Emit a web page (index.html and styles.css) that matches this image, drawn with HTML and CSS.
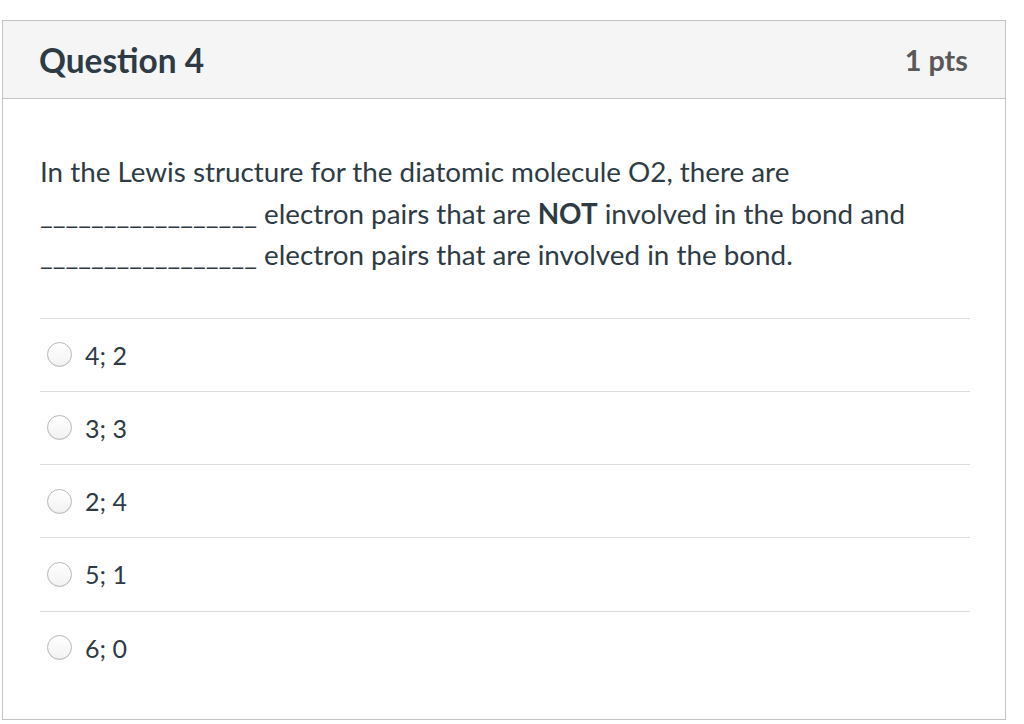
FILE: index.html
```html
<!DOCTYPE html>
<html>
<head>
<meta charset="utf-8">
<link rel="stylesheet" href="styles.css">
</head>
<body>
<div class="question">
  <div class="header">
    <div class="title">Question 4</div>
    <div class="points">1 pts</div>
  </div>
  <div class="content">
    <p class="text">In the Lewis structure for the diatomic molecule O2, there are<br>_________________ electron pairs that are <b>NOT</b> involved in the bond and<br>_________________ electron pairs that are involved in the bond.</p>
    <div class="answers">
      <div class="answer"><span class="radio"></span><span class="label">4; 2</span></div>
      <div class="answer"><span class="radio"></span><span class="label">3; 3</span></div>
      <div class="answer"><span class="radio"></span><span class="label">2; 4</span></div>
      <div class="answer"><span class="radio"></span><span class="label">5; 1</span></div>
      <div class="answer"><span class="radio"></span><span class="label">6; 0</span></div>
    </div>
  </div>
</div>
</body>
</html>
```
FILE: styles.css
```css
html, body {
  margin: 0;
  padding: 0;
  background: #ffffff;
}
body {
  font-family: Lato, "Liberation Sans", sans-serif;
  color: #2d3b45;
}
.question {
  margin: 20px 0 0 2px;
  width: 1004px;
  height: 700px;
  box-sizing: border-box;
  border: 1px solid #c4c4c4;
}
.header {
  height: 77px;
  background: #f5f5f5;
  border-bottom: 1px solid #c4c4c4;
  display: flex;
  align-items: center;
  justify-content: space-between;
  padding: 0 37px 0 36px;
}
.title {
  font-size: 33.4px;
  font-weight: 700;
  color: #2d3b45;
}
.points {
  font-size: 28.8px;
  font-weight: 700;
  color: #595959;
}
.content {
  padding: 52px 35px 0 37px;
}
.text {
  margin: 0;
  font-size: 27.8px;
  line-height: 41.5px;
}
.text b {
  font-weight: 700;
}
.answers {
  margin-top: 42px;
}
.answer {
  height: 72.25px;
  border-top: 1px solid #dcdcdc;
  display: flex;
  align-items: center;
}
.radio {
  width: 25px;
  height: 25px;
  box-sizing: border-box;
  border-radius: 50%;
  border: 1px solid #b8b8b8;
  background: linear-gradient(#ffffff, #f2f2f2);
  box-shadow: inset 0 -1px 1px rgba(0,0,0,0.06);
  margin-left: 7px;
  margin-right: 13px;
}
.label {
  font-size: 25px;
  color: #2d3b45;
}
```
